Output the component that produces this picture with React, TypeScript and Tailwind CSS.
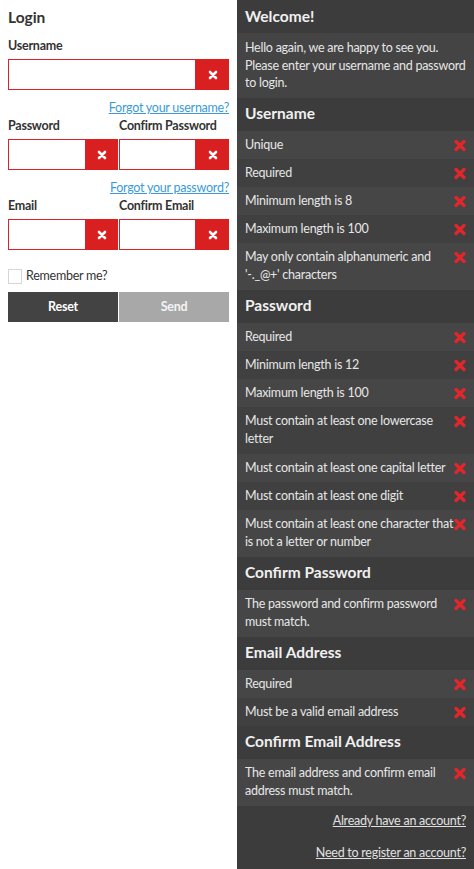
import React from "react";

const font = { fontFamily: 'Lato, "Noto Sans", sans-serif' };

function WhiteX() {
  return (
    <svg width="10" height="10" viewBox="0 0 10 10">
      <path d="M2 2 L8 8 M8 2 L2 8" stroke="#fff" strokeWidth="2.6" strokeLinecap="round" />
    </svg>
  );
}

function RedX() {
  return (
    <svg width="12" height="13" viewBox="0 0 12 13">
      <path d="M2 2.5 L10 10.5 M10 2.5 L2 10.5" stroke="#e3262b" strokeWidth="3.2" strokeLinecap="round" />
    </svg>
  );
}

function InputBox({ btnW }: { btnW: string }) {
  return (
    <div className="flex h-[31px] flex-1 min-w-0">
      <div className="flex-1 min-w-0 border border-[#d9232a] bg-white" />
      <div className={`${btnW} flex shrink-0 items-center justify-center bg-[#d91f1f]`}>
        <WhiteX />
      </div>
    </div>
  );
}

function Row({ text, tall }: { text: string; tall?: boolean }) {
  return (
    <div className={`flex items-start justify-between px-2 ${tall ? "py-[5.5px]" : "py-[5px]"} odd:bg-[#464646] even:bg-[#404040]`}>
      <span className="flex-1 text-[12.5px] leading-[18px] tracking-[-0.25px] text-[#e6e6e6]">{text}</span>
      <span className="mt-[3px] w-[12px] shrink-0">
        <RedX />
      </span>
    </div>
  );
}

function Header({ text }: { text: string }) {
  return (
    <div className="flex h-[33px] items-center bg-[#3c3c3c] px-2 text-[15.5px] font-bold text-[#f0f0f0]">
      {text}
    </div>
  );
}

export default function App() {
  return (
    <div className="flex min-h-[869px] w-[474px]" style={font}>
      <div className="w-[237px] shrink-0 bg-white px-2 text-[#333] tracking-[-0.25px]">
        <div className="pt-[8px] text-[15.5px] font-bold leading-[18px] tracking-normal">Login</div>
        <div className="mt-[11px] text-[12.5px] font-bold leading-[18px]">Username</div>
        <div className="mt-[4px] flex">
          <InputBox btnW="w-[33px]" />
        </div>
        <div className="mt-[10px] text-right text-[12.5px] leading-[16px] text-[#3b9bd6] underline">
          Forgot your username?
        </div>
        <div className="mt-[1px] grid grid-cols-2 gap-[1px] text-[12.5px] font-bold leading-[18px]">
          <div>Password</div>
          <div>Confirm Password</div>
        </div>
        <div className="mt-[4px] grid grid-cols-2 gap-[1px]">
          <div className="flex"><InputBox btnW="w-[32px]" /></div>
          <div className="flex"><InputBox btnW="w-[33px]" /></div>
        </div>
        <div className="mt-[10px] text-right text-[12.5px] leading-[16px] text-[#3b9bd6] underline">
          Forgot your password?
        </div>
        <div className="mt-[1px] grid grid-cols-2 gap-[1px] text-[12.5px] font-bold leading-[18px]">
          <div>Email</div>
          <div>Confirm Email</div>
        </div>
        <div className="mt-[4px] grid grid-cols-2 gap-[1px]">
          <div className="flex"><InputBox btnW="w-[32px]" /></div>
          <div className="flex"><InputBox btnW="w-[33px]" /></div>
        </div>
        <div className="mt-[18px] flex items-center gap-[4px]">
          <div className="h-[15px] w-[14px] border border-[#d6d6d6] bg-white" />
          <span className="text-[12.5px] leading-[16px] text-[#333]">Remember me?</span>
        </div>
        <div className="mt-[8px] grid grid-cols-2 gap-[1px]">
          <button className="h-[30px] bg-[#434343] text-[12.5px] font-bold text-white">Reset</button>
          <button className="h-[30px] bg-[#a8a8a8] text-[12.5px] font-bold text-[#f4f4f4]">Send</button>
        </div>
      </div>

      <div className="flex w-[237px] shrink-0 flex-col bg-[#3c3c3c]">
        <Header text="Welcome!" />
        <div className="bg-[#444444] px-2 py-[6px] text-[12.5px] leading-[17.5px] tracking-[-0.25px] text-[#e6e6e6]">
          Hello again, we are happy to see you. Please enter your username and password to login.
        </div>
        <Header text="Username" />
        <div>
          <Row text="Unique" />
          <Row text="Required" />
          <Row text="Minimum length is 8" />
          <Row text="Maximum length is 100" />
          <Row text="May only contain alphanumeric and '-._@+' characters" tall />
        </div>
        <Header text="Password" />
        <div>
          <Row text="Required" />
          <Row text="Minimum length is 12" />
          <Row text="Maximum length is 100" />
          <Row text="Must contain at least one lowercase letter" tall />
          <Row text="Must contain at least one capital letter" />
          <Row text="Must contain at least one digit" />
          <Row text="Must contain at least one character that is not a letter or number" tall />
        </div>
        <Header text="Confirm Password" />
        <div>
          <Row text="The password and confirm password must match." tall />
        </div>
        <Header text="Email Address" />
        <div>
          <Row text="Required" />
          <Row text="Must be a valid email address" />
        </div>
        <Header text="Confirm Email Address" />
        <div>
          <Row text="The email address and confirm email address must match." tall />
        </div>
        <div className="px-2 pt-[7px] text-right text-[12.5px] leading-[16px] tracking-[-0.25px] text-[#e0e0e0]">
          <div className="underline">Already have an account?</div>
          <div className="mt-[16px] underline">Need to register an account?</div>
        </div>
      </div>
    </div>
  );
}
